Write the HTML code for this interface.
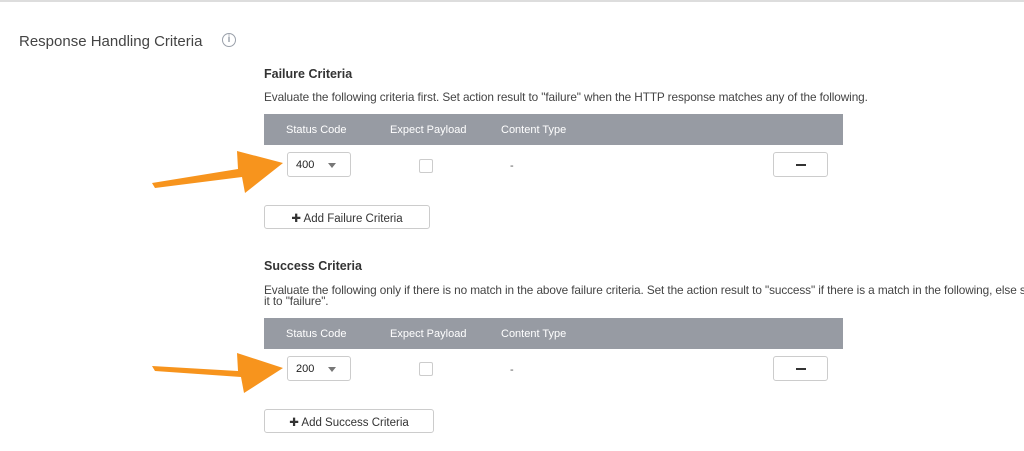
<!DOCTYPE html>
<html><head><style>
body{margin:0;width:1024px;height:451px;background:#fff;font-family:"Liberation Sans",sans-serif;color:#333;position:relative;overflow:hidden}
.a{position:absolute}
.topline{left:0;top:0;width:1024px;height:2px;background:#ddd}
.h1{left:19px;top:33px;font-size:15px;color:#444}
.info{left:222px;top:33px;width:14px;height:14px;border:1.5px solid #9aa0aa;border-radius:50%;box-sizing:border-box;font-size:10px;color:#9aa0aa;text-align:center;line-height:11px;font-weight:bold}
.t{font-size:12.5px;font-weight:bold;color:#333}
.d{font-size:11.8px;color:#444;line-height:11px;white-space:nowrap;letter-spacing:-0.1px}
.hdr{left:264px;width:579px;height:31px;background:#979ba3;color:#fff;font-size:11px}
.hdr span{position:absolute;top:10px}
.sel{width:64px;height:25px;border:1px solid #ccc;border-radius:3px;box-sizing:border-box;font-size:11px;padding:6px 0 0 8px;color:#222}
.sel:after{content:"";position:absolute;left:40px;top:10px;border:4px solid transparent;border-top:5px solid #777}
.cb{width:14px;height:14px;border:1px solid #ccc;box-sizing:border-box;border-radius:2px}
.dash{font-size:11px;color:#555}
.btn{border:1px solid #ccc;border-radius:3px;box-sizing:border-box;background:#fff}
.minus{width:55px;height:25px}
.minus:after{content:"";position:absolute;left:22px;top:11px;width:10px;height:2px;background:#333}
.add{height:24px;font-size:11.5px;color:#333;padding-top:5px;text-align:center}
</style></head><body>
<div class="a topline"></div>
<div class="a h1">Response Handling Criteria</div>
<div class="a info">i</div>

<div class="a t" style="left:264px;top:67px">Failure Criteria</div>
<div class="a d" style="left:264px;top:92px">Evaluate the following criteria first. Set action result to "failure" when the HTTP response matches any of the following.</div>
<div class="a hdr" style="top:114px"><span style="left:22px">Status Code</span><span style="left:126px">Expect Payload</span><span style="left:237px">Content Type</span></div>
<div class="a sel" style="left:287px;top:152px">400</div>
<div class="a cb" style="left:419px;top:159px"></div>
<div class="a dash" style="left:510px;top:160px">-</div>
<div class="a btn minus" style="left:773px;top:152px"></div>
<div class="a btn add" style="left:264px;top:205px;width:166px">✚ Add Failure Criteria</div>

<div class="a t" style="left:264px;top:259px">Success Criteria</div>
<div class="a d" style="left:264px;top:285px">Evaluate the following only if there is no match in the above failure criteria. Set the action result to "success" if there is a match in the following, else set<br>it to "failure".</div>
<div class="a hdr" style="top:318px"><span style="left:22px">Status Code</span><span style="left:126px">Expect Payload</span><span style="left:237px">Content Type</span></div>
<div class="a sel" style="left:287px;top:356px">200</div>
<div class="a cb" style="left:419px;top:362px"></div>
<div class="a dash" style="left:510px;top:364px">-</div>
<div class="a btn minus" style="left:773px;top:356px"></div>
<div class="a btn add" style="left:264px;top:409px;width:170px">✚ Add Success Criteria</div>

<svg class="a" style="left:0;top:0" width="1024" height="451">
<polygon fill="#f7941d" points="152,183 238,169 237,151 283,163 245,193 242,177 155,188"/>
<polygon fill="#f7941d" points="152,366 238,371 237,353 283,368 244,393 241,377 155,371"/>
</svg>
</body></html>
